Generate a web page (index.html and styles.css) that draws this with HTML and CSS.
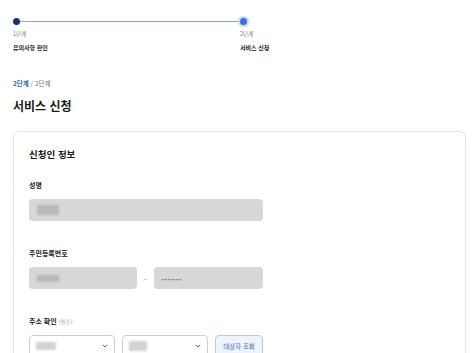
FILE: index.html
```html
<!DOCTYPE html>
<html lang="ko">
<head>
<meta charset="utf-8">
<link rel="stylesheet" href="styles.css">
</head>
<body>
<div class="stepper">
  <div class="step step-first">
    <div class="track"><span class="dot dot-done"></span><span class="line"></span></div>
    <div class="step-num">1단계</div>
    <div class="step-name">유의사항 확인</div>
  </div>
  <div class="step">
    <div class="track"><span class="dot dot-current"></span></div>
    <div class="step-num">2단계</div>
    <div class="step-name">서비스 신청</div>
  </div>
</div>

<div class="crumb"><span class="crumb-cur">2단계</span> / 2단계</div>
<h1 class="title">서비스 신청</h1>

<section class="card">
  <h2 class="card-title">신청인 정보</h2>

  <div class="field">
    <div class="label">성명</div>
    <div class="input input-wide"><span class="blur blur-name"></span></div>
  </div>

  <div class="field field-rrn">
    <div class="label">주민등록번호</div>
    <div class="row">
      <div class="input input-half"><span class="blur blur-rrn"></span></div>
      <span class="dash">–</span>
      <div class="input input-half"><span class="mask">•••••••</span></div>
    </div>
  </div>

  <div class="field field-addr">
    <div class="label">주소 확인 <span class="req">(필수)</span></div>
    <div class="row row-addr">
      <div class="select"><span class="blur blur-sel1"></span>
        <svg class="chev" width="6" height="4" viewBox="0 0 6 4"><path d="M0.8 0.8 L3 3 L5.2 0.8" fill="none" stroke="#555" stroke-width="0.9"/></svg>
      </div>
      <div class="select"><span class="blur blur-sel2"></span>
        <svg class="chev" width="6" height="4" viewBox="0 0 6 4"><path d="M0.8 0.8 L3 3 L5.2 0.8" fill="none" stroke="#555" stroke-width="0.9"/></svg>
      </div>
      <button class="btn">대상자 조회</button>
    </div>
  </div>
</section>
</body>
</html>
```
FILE: styles.css
```css
* { box-sizing: border-box; }
html, body { background: #fff; }
body {
  margin: 0;
  padding: 17px 8px 0 13px;
  font-family: "Noto Sans CJK KR", "Noto Sans", sans-serif;
  color: #1e1e1e;
  overflow: hidden;
}
.stepper { display: flex; }
.step-first { width: 227px; }
.track { display: flex; align-items: center; height: 8px; }
.dot {
  width: 7px; height: 7px; border-radius: 50%;
  flex: none;
}
.dot-done { background: #1c3270; }
.dot-current {
  background: #3a6fdc;
  box-shadow: 0 0 0 2px #c8d8f7;
}
.line { flex: 1; height: 1px; background: #8ea5d3; }
.step-num {
  margin-top: 5px;
  font-size: 5.5px; line-height: 8px;
  color: #7a7a7a;
}
.step-name {
  margin-top: 6px;
  font-size: 6px; line-height: 8px;
  font-weight: 700; color: #222;
}
.crumb {
  margin-top: 27px;
  font-size: 6.5px; line-height: 9px;
  color: #777;
}
.crumb-cur { color: #2f63c8; font-weight: 700; }
.title {
  margin: 10px 0 0;
  font-size: 12px; line-height: 16px;
  font-weight: 700; color: #1a1a1a;
}
.card {
  margin-top: 17px;
  border: 1px solid #e3e3e3;
  border-radius: 6px;
  padding: 16px 15px 40px;
  min-height: 260px;
}
.card-title {
  margin: 0;
  font-size: 9.5px; line-height: 12px;
  font-weight: 700; color: #1a1a1a;
}
.field { margin-top: 21px; }
.field-rrn { margin-top: 28px; }
.field-addr { margin-top: 28px; }
.label {
  font-size: 7px; line-height: 9px;
  font-weight: 700; color: #222;
}
.req { font-weight: 400; color: #999; font-size: 5.5px; }
.input {
  margin-top: 9px;
  height: 22px;
  background: #d7d7d7;
  border-radius: 4px;
  display: flex; align-items: center;
  padding-left: 8px;
}
.input-wide { width: 234px; }
.row { display: flex; align-items: center; gap: 0; margin-top: 9px; }
.row .input { margin-top: 0; }
.input-half { width: 108px; }
.input-half:last-child { width: 109px; }
.dash {
  width: 17px; text-align: center;
  font-size: 7px; color: #999;
}
.mask { font-size: 5px; letter-spacing: 1.2px; color: #444; }
.blur { display: block; background: #b9b9b9; filter: blur(1.2px); }
.blur-name { width: 22px; height: 10px; }
.blur-rrn { width: 22px; height: 7px; }
.row-addr { gap: 7px; margin-top: 8px; }
.select {
  width: 86px; height: 22px;
  border: 1px solid #cfcfcf;
  border-radius: 4px;
  background: #fff;
  display: flex; align-items: center; justify-content: space-between;
  padding: 0 6px 0 6px;
}
.blur-sel1 { width: 20px; height: 8px; background: #d2d2d2; }
.blur-sel2 { width: 18px; height: 10px; background: #d2d2d2; }
.chev { display: block; }
.btn {
  width: 48px; height: 22px;
  border: 1px solid #b8c8ea;
  border-radius: 4px;
  background: #eef3fd;
  color: #4a6db5;
  font-family: inherit;
  font-size: 6.5px;
  padding: 0;
}
```
